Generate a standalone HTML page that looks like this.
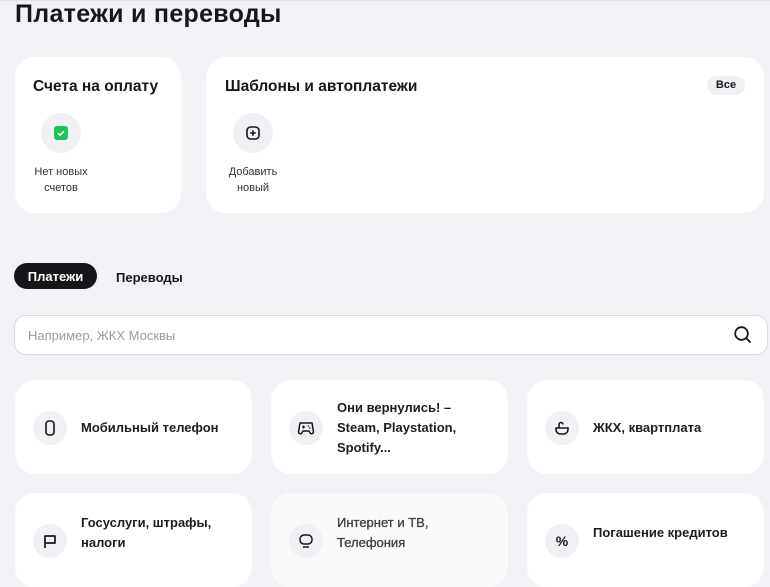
<!DOCTYPE html>
<html><head><meta charset="utf-8"><style>
*{margin:0;padding:0;box-sizing:border-box}
body{width:770px;height:559px;overflow:hidden;background:#f2f3f6;font-family:"Liberation Sans",sans-serif;color:#16171a;position:relative}
.a{position:absolute}
.card{position:absolute;background:#fff;border-radius:20px}
.h{font-weight:bold;font-size:15.5px}
.ic{position:absolute;width:40px;height:40px;border-radius:50%;background:#f0f1f4;display:flex;align-items:center;justify-content:center}
.small{font-size:11px;color:#333;text-align:center;line-height:16px}
.tile{position:absolute;background:#fff;border-radius:20px;height:94px;width:237px}
.ti{position:absolute;left:18px;top:31px;width:34px;height:34px;border-radius:50%;background:#f0f1f4;display:flex;align-items:center;justify-content:center}
.tt{position:absolute;left:66px;font-size:13px;font-weight:bold;line-height:20px;color:#1c1d20}
</style></head><body>
<div class="a" style="left:0;top:0;width:770px;height:1px;background:#dfe2e8"></div>
<div class="a" style="left:15px;top:0px;font-size:25px;font-weight:bold;letter-spacing:0.3px">Платежи и переводы</div>

<div class="card" style="left:15px;top:57px;width:166px;height:156px">
  <div class="a h" style="left:18px;top:21px">Счета на оплату</div>
  <div class="ic" style="left:26px;top:56px"><svg width="14" height="14"><rect width="14" height="14" rx="3" fill="#1ec25a"/><path d="M4 7.2l2 2 4-4" stroke="#fff" stroke-width="1.5" fill="none"/></svg></div>
  <div class="a small" style="left:14px;top:107px;width:64px">Нет новых счетов</div>
</div>

<div class="card" style="left:206px;top:57px;width:558px;height:156px">
  <div class="a h" style="left:19px;top:21px">Шаблоны и автоплатежи</div>
  <div class="a" style="left:501px;top:19px;width:38px;height:19px;border-radius:10px;background:#f0f1f4;font-size:11px;font-weight:bold;text-align:center;line-height:19px">Все</div>
  <div class="ic" style="left:27px;top:56px"><svg width="14" height="14"><rect x="1" y="1" width="12" height="12" rx="3.5" stroke="#16171a" stroke-width="1.6" fill="none"/><path d="M7 4.2v5.6M4.2 7h5.6" stroke="#16171a" stroke-width="1.6"/></svg></div>
  <div class="a small" style="left:15px;top:107px;width:64px">Добавить новый</div>
</div>

<div class="a" style="left:14px;top:263px;width:83px;height:26px;border-radius:13px;background:#16171a;color:#fff;font-size:13px;font-weight:bold;text-align:center;line-height:27px">Платежи</div>
<div class="a" style="left:116px;top:264px;font-size:13px;font-weight:bold;line-height:28px">Переводы</div>

<div class="a" style="left:14px;top:315px;width:754px;height:40px;border-radius:12px;background:#fff;border:1px solid #d8dadf">
  <div class="a" style="left:13px;top:12px;font-size:13px;color:#9a9ca2">Например, ЖКХ Москвы</div>
  <svg class="a" style="left:718px;top:9px" width="20" height="20"><circle cx="8.5" cy="8.5" r="6.3" stroke="#16171a" stroke-width="1.8" fill="none"/><path d="M13 13l4.5 4.5" stroke="#16171a" stroke-width="1.8"/></svg>
</div>

<div class="tile" style="left:15px;top:380px"><div class="ti"><svg width="14" height="18"><rect x="3" y="2" width="8" height="14" rx="3" stroke="#16171a" stroke-width="1.6" fill="none"/></svg></div><div class="tt" style="top:38px">Мобильный телефон</div></div>
<div class="tile" style="left:271px;top:380px"><div class="ti"><svg width="18" height="16"><path d="M3 3h12l1.5 9a2 2 0 0 1-3 1.5L12 11H6l-1.5 2.5a2 2 0 0 1-3-1.5z" stroke="#16171a" stroke-width="1.5" fill="none" stroke-linejoin="round"/><path d="M5 7h3M6.5 5.5v3" stroke="#16171a" stroke-width="1.2"/><circle cx="11.5" cy="6" r=".8" fill="#16171a"/><circle cx="12.8" cy="8" r=".8" fill="#16171a"/></svg></div><div class="tt" style="top:18px">Они вернулись! –<br>Steam, Playstation,<br>Spotify...</div></div>
<div class="tile" style="left:527px;top:380px"><div class="ti"><svg width="18" height="16"><path d="M3 8h12v1.5a4.5 4.5 0 0 1-4.5 4.5h-3A4.5 4.5 0 0 1 3 9.5zM6 8V4.5a2 2 0 0 1 4 0" stroke="#16171a" stroke-width="1.6" fill="none"/></svg></div><div class="tt" style="top:38px">ЖКХ, квартплата</div></div>

<div class="tile" style="left:15px;top:493px"><div class="ti"><svg width="16" height="16"><path d="M3 15V3h10v7H3" stroke="#16171a" stroke-width="1.7" fill="none" stroke-linejoin="round"/></svg></div><div class="tt" style="top:20px">Госуслуги, штрафы,<br>налоги</div></div>
<div class="tile" style="left:271px;top:493px;background:#fafafb"><div class="ti"><svg width="16" height="16"><rect x="2" y="2" width="12" height="9" rx="4" stroke="#16171a" stroke-width="1.5" fill="none"/><path d="M5 14h6" stroke="#16171a" stroke-width="1.5"/></svg></div><div class="tt" style="top:20px;font-weight:normal;-webkit-text-stroke:0.3px #333;color:#444">Интернет и ТВ,<br>Телефония</div></div>
<div class="tile" style="left:527px;top:493px"><div class="ti" style="font-weight:bold;font-size:14px">%</div><div class="tt" style="top:30px">Погашение кредитов</div></div>
</body></html>
